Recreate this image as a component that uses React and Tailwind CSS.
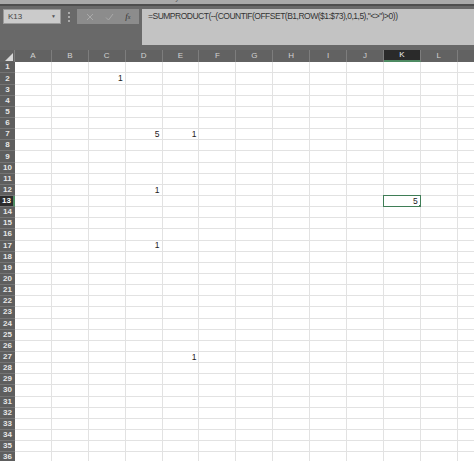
import React from "react";

const COLS = ["A", "B", "C", "D", "E", "F", "G", "H", "I", "J", "K", "L", "M"];
const values = {
  "C2": "1",
  "D7": "5",
  "E7": "1",
  "D12": "1",
  "D17": "1",
  "E27": "1",
  "K13": "5",
};

function ColHeader({ c }) {
  const sel = c === "K";
  return (
    <div
      className={
        "w-[36.9px] shrink-0 h-full flex items-center justify-center border-r border-[#7d7d7d] " +
        (sel ? "bg-[#2a2a2a] text-[#f0f0f0] border-b-2 border-b-[#4d8a62]" : "text-[#d2d2d2]")
      }
    >
      {c === "M" ? "" : c}
    </div>
  );
}

function Row({ r }) {
  const sel = r === 13;
  return (
    <div className="flex h-[11.15px] shrink-0">
      <div
        className={
          "w-[15px] shrink-0 flex items-center justify-center text-[8px] font-bold border-b border-[#747474] " +
          (sel ? "bg-[#2c2c2c] text-white border-r-2 border-r-[#4d8a62]" : "bg-[#5e5e5e] text-[#e6e6e6]")
        }
      >
        {r}
      </div>
      {COLS.map((c) => {
        const key = c + r;
        const v = values[key];
        const isSel = key === "K13";
        return (
          <div
            key={c}
            className="relative w-[36.9px] shrink-0 border-r border-b border-[#e2e2e2] bg-white flex items-center justify-end pr-[2px] text-[8.5px] text-[#222]"
          >
            {isSel && (
              <div className="absolute left-[-1px] top-[-1px] right-[-1px] bottom-[-1px] border-[1.5px] border-[#3f7d56]">
                <div className="absolute right-[-2px] bottom-[-2px] w-[3px] h-[3px] bg-[#3f7d56]" />
              </div>
            )}
            <span className="relative leading-none">{v}</span>
          </div>
        );
      })}
    </div>
  );
}

export default function App() {
  const rows = Array.from({ length: 36 }, (_, i) => i + 1);
  return (
    <div
      className="w-[474px] h-[461px] overflow-hidden bg-white flex flex-col"
      style={{ fontFamily: '"Liberation Sans", Arial, sans-serif' }}
    >
      {/* ribbon remnant */}
      <div className="h-[4px] shrink-0 bg-[#a9a9a9] relative overflow-hidden">
        <span className="absolute left-[122px] top-[-6px] text-[8px] text-[#555] leading-none">Function Library</span>
        <span className="absolute left-[358px] top-[-6px] text-[8px] text-[#555] leading-none">Defined Names</span>
      </div>
      <div className="h-[2px] shrink-0 bg-[#4e4e4e]" />
      {/* formula bar area */}
      <div className="h-[44px] shrink-0 bg-[#696969] flex items-start pt-[3px]">
        <div className="ml-[3px] w-[58px] h-[15px] bg-[#cbcbcb] border border-[#9a9a9a] flex items-center justify-between px-[4px] text-[8px] text-[#444]">
          <span>K13</span>
          <span className="text-[5px] text-[#555]">▼</span>
        </div>
        <div className="ml-[7px] mt-[3px] flex flex-col gap-[2px]">
          <div className="w-[2px] h-[2px] bg-[#aaa]" />
          <div className="w-[2px] h-[2px] bg-[#aaa]" />
          <div className="w-[2px] h-[2px] bg-[#aaa]" />
        </div>
        <div className="ml-[7px] w-[62px] h-[15px] bg-[#8c8c8c] flex items-center justify-around px-[3px]">
          <svg width="8" height="8" viewBox="0 0 8 8"><path d="M1 1 L7 7 M7 1 L1 7" stroke="#a9a9a9" strokeWidth="1" /></svg>
          <svg width="9" height="8" viewBox="0 0 9 8"><path d="M1 4.5 L3.5 7 L8 1" stroke="#a9a9a9" strokeWidth="1" fill="none" /></svg>
          <span className="text-[9px] italic text-[#333]" style={{ fontFamily: '"Liberation Serif", serif' }}>
            f<span className="text-[6px]">x</span>
          </span>
        </div>
        <div
          className="ml-[3px] flex-1 h-[36px] bg-[#c3c3c3] px-[6px] pt-[2px] text-[8.5px] text-[#333] leading-[11px] whitespace-nowrap tracking-[-0.5px]"
        >
          =SUMPRODUCT(--(COUNTIF(OFFSET(B1,ROW($1:$73),0,1,5),"&lt;&gt;")&gt;0))
        </div>
      </div>
      {/* column header */}
      <div className="h-[12.3px] shrink-0 flex bg-[#626262] text-[8px]">
        <div className="w-[15px] shrink-0 h-full relative border-r border-[#7d7d7d]">
          <svg className="absolute right-[1px] bottom-[1px]" width="8" height="8" viewBox="0 0 8 8">
            <path d="M8 0 L8 8 L0 8 Z" fill="#d8d8d8" />
          </svg>
        </div>
        {COLS.map((c) => (
          <ColHeader key={c} c={c} />
        ))}
      </div>
      {rows.map((r) => (
        <Row key={r} r={r} />
      ))}
    </div>
  );
}
